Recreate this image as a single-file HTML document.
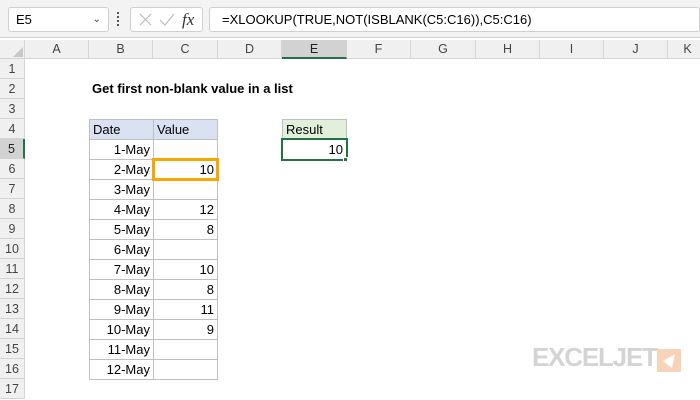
<!DOCTYPE html>
<html><head><style>
*{margin:0;padding:0;box-sizing:border-box}
body{width:700px;height:400px;overflow:hidden;background:#fff;font-family:"Liberation Sans",Arial,sans-serif;font-size:13px;color:#000;position:relative}
.a{position:absolute}
.ch{position:absolute;top:40px;height:19px;background:#f0f0f0;border-right:1px solid #d4d4d4;border-bottom:1px solid #d4d4d4;text-align:center;line-height:19px;color:#444;font-size:12.5px}
.rh{position:absolute;left:0;width:25px;height:20px;background:#f0f0f0;border-bottom:1px solid #d4d4d4;border-right:1px solid #d4d4d4;text-align:center;line-height:20px;color:#444;font-size:12.5px}
.c{position:absolute;height:21px;border:1px solid #bfbfbf;line-height:19px;padding:0 3px;font-size:13px}
.r{text-align:right}
</style></head><body>
<div class="a" style="left:0;top:0;width:700px;height:38px;background:#f3f3f3;border-bottom:1px solid #d4d4d4"></div>
<div class="a" style="left:8px;top:7px;width:101px;height:25px;background:#fff;border:1px solid #d0d0d0;border-radius:3px;line-height:23px;padding-left:7px">E5<span style="position:absolute;right:7px;top:0;font-size:10px;color:#444">&#8964;</span></div>
<div class="a" style="left:117px;top:12px;width:3px;height:14px;border-left:2px dotted #555"></div>
<div class="a" style="left:130px;top:7px;width:73px;height:25px;background:#fff;border:1px solid #d0d0d0;border-radius:3px"></div>
<svg class="a" style="left:136px;top:11px" width="64" height="18"><path d="M4 3l11 11M15 3L4 14" stroke="#bbb" stroke-width="1.2" fill="none"/><path d="M24 9l5 5 9-11" stroke="#bbb" stroke-width="1.2" fill="none"/><text x="46" y="14" font-family="Liberation Serif" font-style="italic" font-size="17" fill="#333">fx</text></svg>
<div class="a" style="left:209px;top:7px;width:491px;height:25px;background:#fff;border:1px solid #d0d0d0;border-radius:3px;line-height:23px;padding-left:12px;font-size:13px">=XLOOKUP(TRUE,NOT(ISBLANK(C5:C16)),C5:C16)</div>
<div class="a" style="left:0;top:40px;width:25px;height:19px;background:#f0f0f0;border-right:1px solid #d4d4d4;border-bottom:1px solid #d4d4d4"></div>
<svg class="a" style="left:12px;top:46px" width="12" height="12"><path d="M11 1V11H1Z" fill="#c8c8c8"/></svg>
<div class="ch" style="left:25px;width:64px">A</div>
<div class="ch" style="left:89px;width:64px">B</div>
<div class="ch" style="left:153px;width:65px">C</div>
<div class="ch" style="left:218px;width:64px">D</div>
<div class="ch" style="left:282px;width:65px;background:#d2d2d2;border-bottom:2px solid #217346;color:#222">E</div>
<div class="ch" style="left:347px;width:64px">F</div>
<div class="ch" style="left:411px;width:65px">G</div>
<div class="ch" style="left:476px;width:64px">H</div>
<div class="ch" style="left:540px;width:64px">I</div>
<div class="ch" style="left:604px;width:64px">J</div>
<div class="ch" style="left:668px;width:40px">K</div>
<div class="rh" style="top:59px">1</div><div class="rh" style="top:79px">2</div><div class="rh" style="top:99px">3</div><div class="rh" style="top:119px">4</div>
<div class="rh" style="top:139px;background:#d2d2d2;border-right:2px solid #217346;color:#222">5</div>
<div class="rh" style="top:159px">6</div><div class="rh" style="top:179px">7</div><div class="rh" style="top:199px">8</div><div class="rh" style="top:219px">9</div><div class="rh" style="top:239px">10</div><div class="rh" style="top:259px">11</div><div class="rh" style="top:279px">12</div><div class="rh" style="top:299px">13</div><div class="rh" style="top:319px">14</div><div class="rh" style="top:339px">15</div><div class="rh" style="top:359px">16</div><div class="rh" style="top:379px">17</div>
<div class="a" style="left:92px;top:81px;font-weight:bold;font-size:13px">Get first non-blank value in a list</div>
<div class="c" style="left:89px;top:119px;width:65px;background:#d9e1f2">Date</div>
<div class="c" style="left:153px;top:119px;width:65px;background:#d9e1f2">Value</div>
<div class="c r" style="left:89px;top:139px;width:65px">1-May</div><div class="c" style="left:153px;top:139px;width:65px"></div>
<div class="c r" style="left:89px;top:159px;width:65px">2-May</div><div class="c" style="left:153px;top:159px;width:65px"></div>
<div class="c r" style="left:89px;top:179px;width:65px">3-May</div><div class="c" style="left:153px;top:179px;width:65px"></div>
<div class="c r" style="left:89px;top:199px;width:65px">4-May</div><div class="c r" style="left:153px;top:199px;width:65px">12</div>
<div class="c r" style="left:89px;top:219px;width:65px">5-May</div><div class="c r" style="left:153px;top:219px;width:65px">8</div>
<div class="c r" style="left:89px;top:239px;width:65px">6-May</div><div class="c" style="left:153px;top:239px;width:65px"></div>
<div class="c r" style="left:89px;top:259px;width:65px">7-May</div><div class="c r" style="left:153px;top:259px;width:65px">10</div>
<div class="c r" style="left:89px;top:279px;width:65px">8-May</div><div class="c r" style="left:153px;top:279px;width:65px">8</div>
<div class="c r" style="left:89px;top:299px;width:65px">9-May</div><div class="c r" style="left:153px;top:299px;width:65px">11</div>
<div class="c r" style="left:89px;top:319px;width:65px">10-May</div><div class="c r" style="left:153px;top:319px;width:65px">9</div>
<div class="c r" style="left:89px;top:339px;width:65px">11-May</div><div class="c" style="left:153px;top:339px;width:65px"></div>
<div class="c r" style="left:89px;top:359px;width:65px">12-May</div><div class="c" style="left:153px;top:359px;width:65px"></div>
<div class="a r" style="left:152px;top:158px;width:67px;height:23px;border:3px solid #f5a800;line-height:17px;padding-right:2px">10</div>
<div class="c" style="left:282px;top:119px;width:65px;background:#e2efda">Result</div>
<div class="a r" style="left:281px;top:138px;width:67px;height:23px;border:2px solid #217346;line-height:19px;padding-right:3px">10</div>
<div class="a" style="left:343px;top:157px;width:5px;height:5px;background:#217346;border:1px solid #fff"></div>
<div class="a" style="left:532px;top:342px;font-size:26px;font-weight:900;color:#d4d4d4;letter-spacing:-1.2px;font-family:'Liberation Sans',sans-serif">EXCELJET</div>
<svg class="a" style="left:657px;top:349px" width="24" height="23"><rect width="24" height="23" fill="#f8d3b8"/><path d="M6 12L18 5 15 19Z" fill="#fff"/></svg>
</body></html>
